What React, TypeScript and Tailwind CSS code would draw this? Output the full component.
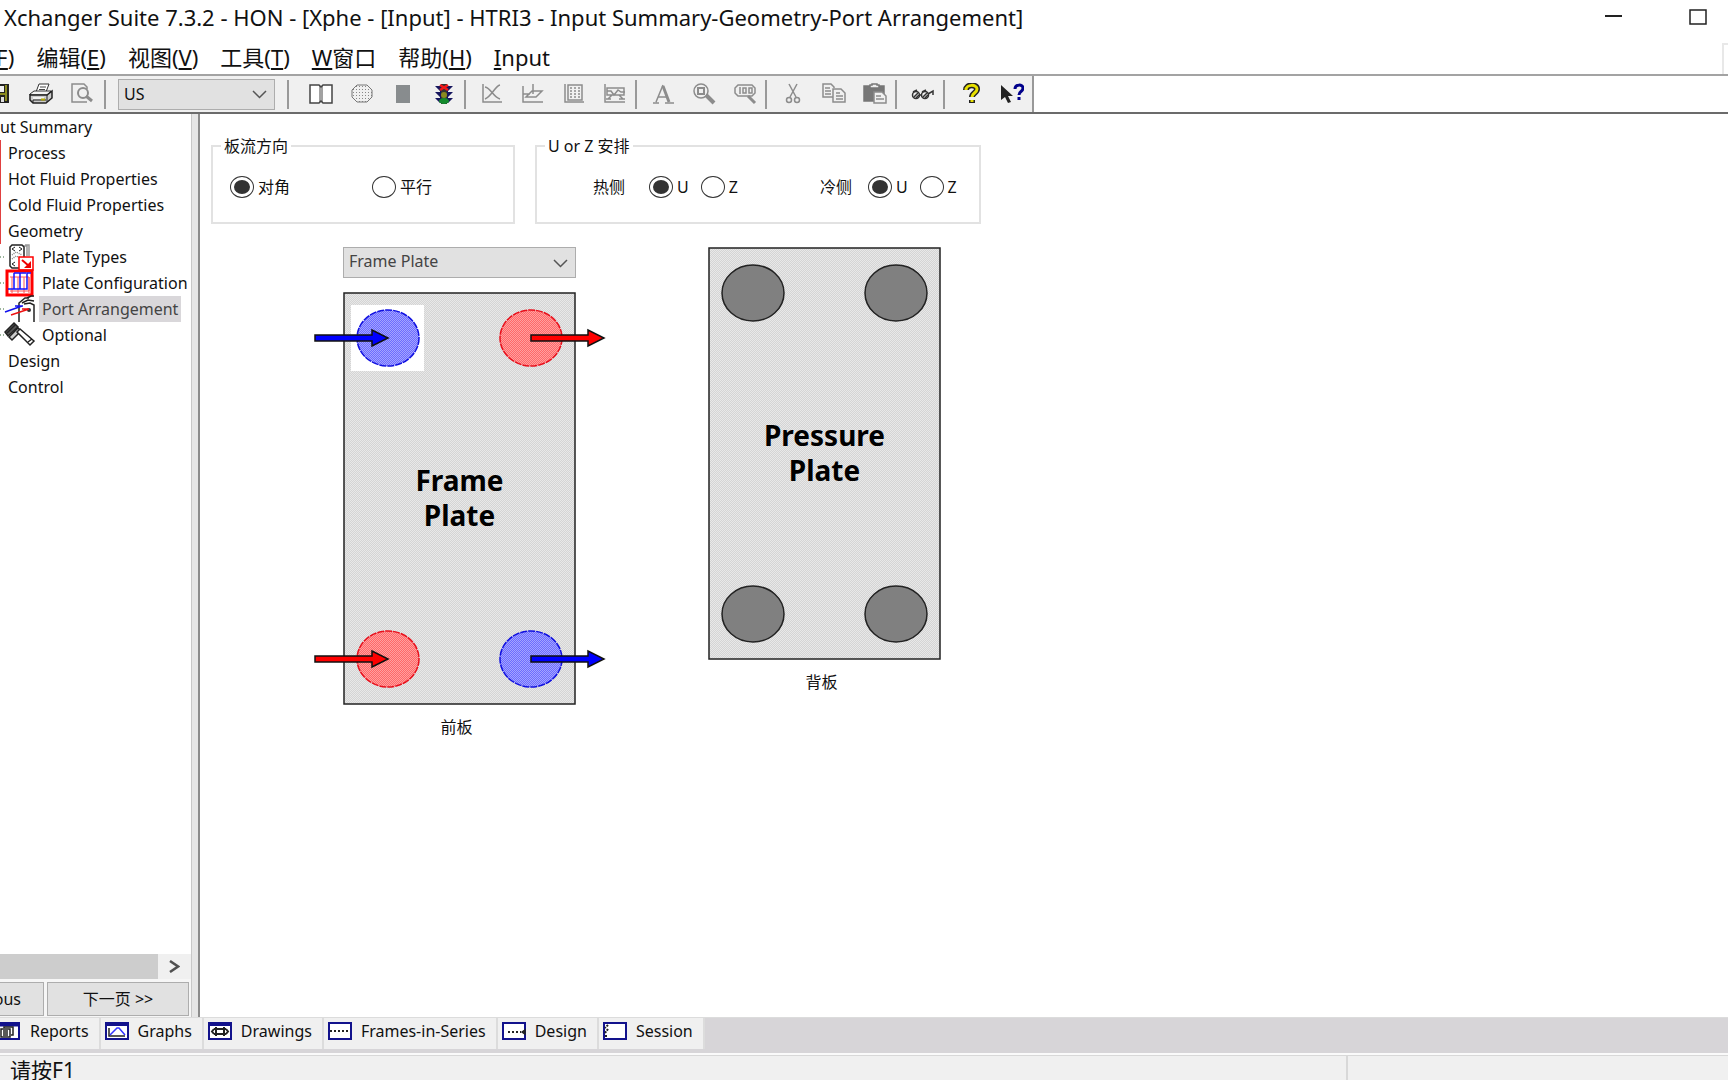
import { useState, type ReactNode } from 'react';
import clsx from 'clsx';

type Flow = 'in' | 'out';
type Port = { cx: number; cy: number; fluid?: 'hot' | 'cold'; flow?: Flow; selected?: boolean };

const FLUID = {
  hot: { edge: '#e8101c', arrow: '#ff0000', fill: 'url(#dither-hot)' },
  cold: { edge: '#1010e0', arrow: '#0000ff', fill: 'url(#dither-cold)' },
};

const FRAME_PORTS: Port[] = [
  { cx: 45, cy: 46, fluid: 'cold', flow: 'in', selected: true },
  { cx: 188, cy: 46, fluid: 'hot', flow: 'out' },
  { cx: 45, cy: 367, fluid: 'hot', flow: 'in' },
  { cx: 188, cy: 367, fluid: 'cold', flow: 'out' },
];

const PRESSURE_PORTS: Port[] = [
  { cx: 45, cy: 46 },
  { cx: 188, cy: 46 },
  { cx: 45, cy: 367 },
  { cx: 188, cy: 367 },
];

const MENUS = [
  { pre: '', key: 'F', post: ')' },
  { pre: '编辑(', key: 'E', post: ')' },
  { pre: '视图(', key: 'V', post: ')' },
  { pre: '工具(', key: 'T', post: ')' },
  { pre: '', key: 'W', post: '窗口' },
  { pre: '帮助(', key: 'H', post: ')' },
  { pre: '', key: 'I', post: 'nput' },
];

export default function App() {
  return (
    <div className="flex h-screen flex-col overflow-hidden bg-white font-['Noto_Sans','Noto_Sans_CJK_SC',sans-serif] text-base text-[#111]">
      <TitleBar />
      <MenuBar />
      <Toolbar />
      <div className="flex min-h-0 flex-1">
        <Sidebar />
        <main className="min-w-0 flex-1 bg-white pt-5 pl-[11px]">
          <Options />
          <Plates />
        </main>
      </div>
      <TabBar />
      <StatusBar />
    </div>
  );
}

function TitleBar() {
  return (
    <header className="flex h-9 shrink-0 items-center justify-between pl-1">
      <h1 className="text-[22px] leading-8 whitespace-nowrap pb-[2px]">
        Xchanger Suite 7.3.2 - HON - [Xphe - [Input] - HTRI3 - Input Summary-Geometry-Port Arrangement]
      </h1>
      <div className="flex gap-[65px] pr-5">
        <button aria-label="Minimize">
          <svg width="20" height="18"><path d="M2 7H19" stroke="#222" strokeWidth="2" /></svg>
        </button>
        <button aria-label="Maximize">
          <svg width="20" height="18"><path d="M2 1H18V15H2Z" fill="none" stroke="#222" strokeWidth="1.500" /></svg>
        </button>
      </div>
    </header>
  );
}

function MenuBar() {
  return (
    <nav className="flex h-10 shrink-0 items-center justify-between border-b-2 border-[#a3a3a3]">
      <div className="-ml-1 flex gap-[22px] pt-1 text-[22px] leading-8">
        {MENUS.map((m) => (
          <button key={m.key} className="whitespace-nowrap">
            {m.pre}
            <span className="underline underline-offset-2">{m.key}</span>
            {m.post}
          </button>
        ))}
      </div>
      <div className="mt-[7px] h-[31px] w-[6px] border-t-2 border-l-2 border-[#e8e8e8]" />
    </nav>
  );
}

function Chevron() {
  return (
    <svg className="pointer-events-none absolute top-1/2 right-2 -mt-1" width="15" height="9" fill="none" stroke="#555" strokeWidth="1.500">
      <path d="M1 1L7.500 7.500L14 1" />
    </svg>
  );
}

function Separator() {
  return <div className="h-[29px] w-[2px] shrink-0 bg-[#999]" />;
}

function Tool({ label, children }: { label: string; children: ReactNode }) {
  return (
    <button aria-label={label} className="flex h-8 w-[41px] shrink-0 items-center justify-center">
      <svg width="24" height="22" viewBox="0 0 24 22" fill="none" stroke="#8c8c8c" strokeWidth="1.500">
        {children}
      </svg>
    </button>
  );
}

function ToolGroup({ children }: { children: ReactNode }) {
  return (
    <>
      <Separator />
      <div className="flex pl-[5px]">{children}</div>
    </>
  );
}

function Toolbar() {
  return (
    <div className="flex h-[38px] shrink-0 border-b-2 border-[#6b6b6b]">
      <div className="flex items-center border-r-2 border-[#999] bg-[#f0f0f0]">
        <button aria-label="Save" className="w-5 shrink-0">
          <svg width="10" height="22">
            <path d="M0 1H9V20H0Z" fill="#222" />
            <path d="M0 3H4V9H0Z" fill="#f0f0f0" />
            <path d="M5 2H7V18H5ZM0 10H5V12H0Z" fill="#8a8a20" />
            <path d="M1 14H4V19H1Z" fill="#ddd" />
          </svg>
        </button>
        <Tool label="Print">
          <path d="M7 9L10 1H20L17 9" fill="#fff" stroke="#333" strokeWidth="1" />
          <path d="M11 4H17M10 6.500H16" stroke="#444" strokeWidth="1" />
          <path d="M1 11L5 8H22L18 12H1Z" fill="#f4f4f4" stroke="#333" strokeWidth="1" />
          <path d="M1 11V17L4 20H17L23 15V8L18 12H1" fill="#ccc" stroke="#222" />
          <path d="M18 12V19M4 20V17H17" stroke="#222" strokeWidth="1" />
          <path d="M4 15H15" stroke="#fff" />
          <path d="M12 16.500H16" stroke="#b0a800" strokeWidth="2" />
        </Tool>
        <Tool label="Print preview">
          <path d="M17 19H2V1H14L17 4V6" />
          <circle cx="13" cy="10" r="5" strokeWidth="2" />
          <path d="M16 13L22 18" strokeWidth="3" />
        </Tool>
        <div className="pl-[2px]">
          <Separator />
        </div>
        <div className="relative mx-3 w-[157px]">
          <select aria-label="Units" className="h-[31px] w-full appearance-none border border-[#adadad] bg-[#e1e1e1] pl-[5px] text-base leading-6">
            <option>US</option>
            <option>SI</option>
            <option>MKH</option>
          </select>
          <Chevron />
        </div>
        <Separator />
        <div className="flex pl-[11px]">
          <Tool label="Tile">
            <path d="M1 2H10L12 4L14 2H23V20H14L12 18L10 20H1Z" fill="#fff" stroke="#444" />
            <path d="M11 3V19M13 3V19" stroke="#444" strokeWidth="1" />
          </Tool>
          <Tool label="Stop">
            <path d="M7 2H17L22 7V14L17 19H7L2 14V7Z" fill="url(#stipple)" stroke="#777" strokeWidth="1" />
          </Tool>
          <Tool label="Halt"><path d="M5 2H19V20H5Z" fill="#888c8e" stroke="none" /></Tool>
          <Tool label="Run">
            <path d="M3 3H21L16 8V9H21L16 14V15H21L16 20H8L3 15H8V14L3 9H8V8Z" fill="#16165e" stroke="none" />
            <path d="M9 1H15V21H9Z" fill="#333" stroke="none" />
            <path d="M8 2L16 7M16 2L8 7" stroke="#f01818" strokeWidth="2.500" />
            <circle cx="12" cy="12" r="3" fill="#8a8a20" stroke="none" />
            <ellipse cx="12" cy="18" rx="5" ry="3" fill="#138a2c" stroke="none" />
          </Tool>
        </div>
        <ToolGroup>
          <Tool label="Cross plot">
            <path d="M3 1V19H22M5 4C11 5 13 14 20 16M20 2C15 3 12 13 5 16" />
          </Tool>
          <Tool label="Surface plot">
            <path d="M2 3V19H22M2 11H9M5 14H15L21 8H11ZM12 1V11" />
          </Tool>
          <Tool label="Grid">
            <path d="M3 1V19H22M6 2H20V17H6Z" />
            <path d="M8 5H19M8 8H19M8 11H19M8 14H19" strokeDasharray="2 2" />
          </Tool>
          <Tool label="Profile">
            <path d="M2 1V19H22M4 5H21V12H4ZM4 8H8L11 12L15 7L18 9H22M5 16L9 12M20 16L16 12M3 16H8M16 16H22" />
          </Tool>
        </ToolGroup>
        <ToolGroup>
          <Tool label="Font">
            <path d="M2 20H8M14 20H23M5 19L12 2M7 14H16" />
            <path d="M12 3L18 19" strokeWidth="3" />
          </Tool>
          <Tool label="Zoom">
            <circle cx="9" cy="8" r="7" />
            <path d="M6 5H12V11H6Z" strokeWidth="2" />
            <path d="M14 12L22 20" strokeWidth="4" />
          </Tool>
          <Tool label="Zoom 100%">
            <path d="M5 2H19L22 5V10L19 13H5L2 10V5Z" />
            <path d="M7 4V11M10 5H13V10H10ZM16 5H19V10H16Z" />
            <path d="M15 13L22 20" strokeWidth="3" />
          </Tool>
        </ToolGroup>
        <ToolGroup>
          <Tool label="Cut">
            <path d="M8 1L15 14M16 1L9 14" />
            <circle cx="8" cy="17" r="2.500" />
            <circle cx="16" cy="17" r="2.500" />
          </Tool>
          <Tool label="Copy">
            <path d="M11 14H1V1H9L12 4V5M3 5H8M3 8H9M3 11H9" />
            <path d="M11 6H19L23 10V19H11ZM14 10H18M14 13H21M14 16H21" fill="#f0f0f0" />
          </Tool>
          <Tool label="Paste">
            <path d="M1 3H21V18H1Z" fill="#777" stroke="#777" />
            <path d="M7 5V2H9V1H14V2H16V5Z" fill="#eee" stroke="#777" />
            <path d="M11 9H19L23 13V20H11ZM13 13H18M13 16H21" fill="#f0f0f0" />
          </Tool>
        </ToolGroup>
        <ToolGroup>
          <Tool label="View">
            <g stroke="#333">
              <circle cx="5" cy="12" r="3.500" />
              <circle cx="14" cy="12" r="3.500" />
              <path d="M2 9L6 7M11 9L15 7M3 14L7 10M12 14L16 10M5 15L8 12M14 15L17 12M17 11L22 8V12M8 12H11" />
            </g>
          </Tool>
        </ToolGroup>
        <ToolGroup>
          <Tool label="Help">
            <path d="M7 7C7 1 18 1 18 6C18 10 13 10 13 14M13 17V20" stroke="#222" strokeWidth="6" />
            <path d="M7 7C7 1 18 1 18 6C18 10 13 10 13 14M13 17V19" stroke="#e8e000" strokeWidth="3" />
          </Tool>
          <Tool label="Context help">
            <path d="M1 2V17L5 14L8 20L11 19L8 13H13Z" fill="#222" stroke="none" />
            <path d="M15 6C15 1 23 1 23 5C23 9 19 8 19 12M19 14V17" stroke="#00008b" strokeWidth="3" />
          </Tool>
        </ToolGroup>
      </div>
    </div>
  );
}

function TreeItem({ children, mark }: { children: ReactNode; mark?: boolean }) {
  return (
    <li className={clsx('h-[26px] border-l pl-[7px] leading-[26px] whitespace-nowrap', mark ? 'border-[#e04040]' : 'border-transparent')}>
      {children}
    </li>
  );
}

function TreeLeaf({ label, icon, selected }: { label: string; icon: ReactNode; selected?: boolean }) {
  return (
    <li className="flex h-[26px] items-center">
      <svg width="39" height="28" viewBox="0 0 39 28" fill="none" stroke="#222" strokeWidth="1.500" className="shrink-0">
        <path d="M0 14H5" stroke="#7a9a7a" strokeDasharray="1 2" />
        {icon}
      </svg>
      <span className={clsx('pr-[3px] pl-[3px] leading-[26px] whitespace-nowrap', selected && 'bg-[#d9d7da] text-[#444]')}>{label}</span>
    </li>
  );
}

function Sidebar() {
  return (
    <aside className="flex w-[200px] shrink-0 border-r-2 border-[#8c8c8c]">
      <div className="flex w-[191px] flex-col">
        <ul className="min-h-0 flex-1 overflow-hidden">
          <li className="h-[26px] leading-[26px]">ut Summary</li>
          <TreeItem mark>Process</TreeItem>
          <TreeItem mark>Hot Fluid Properties</TreeItem>
          <TreeItem mark>Cold Fluid Properties</TreeItem>
          <TreeItem mark>Geometry</TreeItem>
          <TreeLeaf
            label="Plate Types"
            icon={
              <>
                <path d="M22 3H27V13M25 2H29V13" stroke="#999" />
                <path d="M12 2H22L24 4V23L22 25H12L10 23V4Z" fill="#fff" />
                <path d="M15 4L12 6L15 8M19 4L22 6L19 8M15 19L12 21L15 23" strokeWidth="1" />
                <path d="M12 12L16 9L22 12M12 16L16 13L22 16" stroke="#888" strokeDasharray="1 1" />
                <path d="M19 14H33V27H19Z" fill="#fff" stroke="#f00" />
                <path d="M22 17L29 23" stroke="#e00" strokeWidth="2" />
                <path d="M31 18V25H24Z" fill="#e00" stroke="none" />
              </>
            }
          />
          <TreeLeaf
            label="Plate Configuration"
            icon={
              <>
                <path d="M7 2H32V26H7Z" fill="#fff" stroke="#f00" strokeWidth="3" />
                <path d="M10 8H29V22H10M12 8V24M18 8V24M24 8V24M29 8V24" stroke="#f55" strokeWidth="1" />
                <path d="M8 20H27V4H31M14 4V20M14 4H26M20 4V20" stroke="#11f" />
              </>
            }
          />
          <TreeLeaf
            selected
            label="Port Arrangement"
            icon={
              <>
                <path d="M19 9L24 5L29 9H34V27H19Z" fill="#fff" stroke="none" />
                <path d="M19 27V8L25 3H29M34 27V10L30 8L24 9M22 8L28 5L34 6M27 3L31 1H34" />
                <circle cx="29" cy="15" r="2" fill="#333" stroke="none" />
                <path d="M5 17L22 11M15 11L23 11" stroke="#11e" />
                <path d="M11 20L29 14M22 14H28" stroke="#e11" />
              </>
            }
          />
          <TreeLeaf
            label="Optional"
            icon={
              <>
                <path d="M5 11L14 2L18 6L8 15Z" fill="#555" />
                <path d="M9 16L18 7L21 10L12 19Z" fill="#ccc" />
                <path d="M17 11L20 8L34 20L30 24Z" fill="#fff" />
                <path d="M28 21L32 18M7 12L15 4" />
              </>
            }
          />
          <TreeItem>Design</TreeItem>
          <TreeItem>Control</TreeItem>
        </ul>
        <div className="flex h-[25px] shrink-0 bg-[#f0f0f0]">
          <div className="w-[158px] bg-[#cdcdcd]" />
          <button aria-label="Scroll right" className="flex flex-1 items-center justify-center">
            <svg width="11" height="13" fill="none" stroke="#505050" strokeWidth="2.500"><path d="M1 1L9 6.500L1 12" /></svg>
          </button>
        </div>
        <div className="flex h-[38px] shrink-0 gap-[3px] bg-[#f6f6f6] pt-[3px] pb-[1px]">
          <button className="flex h-[34px] w-[44px] items-center justify-end border border-l-0 border-[#adadad] bg-[#e1e1e1] pr-[22px]">ous</button>
          <button className="h-[34px] w-[142px] border border-[#adadad] bg-[#e1e1e1]">下一页 &gt;&gt;</button>
        </div>
      </div>
      <div className="flex-1 border-l border-[#c8c8c8] bg-[#e6e6e6]" />
    </aside>
  );
}

function Radio({ name, label, checked, onChange }: { name: string; label: string; checked: boolean; onChange: () => void }) {
  return (
    <label className="flex items-center gap-1">
      <input
        type="radio"
        name={name}
        checked={checked}
        onChange={onChange}
        className="grid h-[22px] w-6 appearance-none place-items-center rounded-[50%] border border-[#333] bg-white before:h-[14px] before:w-4 before:rounded-[50%] checked:before:bg-[#333]"
      />
      {label}
    </label>
  );
}

function Options() {
  const [dir, setDir] = useState('diag');
  const [hot, setHot] = useState('U');
  const [cold, setCold] = useState('U');

  return (
    <div className="flex gap-5 leading-6">
      <fieldset className="flex h-[90px] w-[304px] shrink-0 border-2 border-[#e2e2e2] pt-[17px] pl-[17px]">
        <legend className="-ml-[9px] px-[3px]">板流方向</legend>
        <div className="flex h-6 gap-[82px]">
          <Radio name="direction" label="对角" checked={dir === 'diag'} onChange={() => setDir('diag')} />
          <Radio name="direction" label="平行" checked={dir === 'par'} onChange={() => setDir('par')} />
        </div>
      </fieldset>
      <fieldset className="h-[90px] w-[446px] shrink-0 border-2 border-[#e2e2e2] pt-[17px] pl-[56px]">
        <legend className="-ml-12 px-[3px]">U or Z 安排</legend>
        <div className="flex h-6 gap-[82px]">
          <div className="flex items-center gap-3" role="radiogroup" aria-label="热侧">
            <span className="pr-3">热侧</span>
            <Radio name="hot" label="U" checked={hot === 'U'} onChange={() => setHot('U')} />
            <Radio name="hot" label="Z" checked={hot === 'Z'} onChange={() => setHot('Z')} />
          </div>
          <div className="flex items-center gap-3" role="radiogroup" aria-label="冷侧">
            <span className="pr-1">冷侧</span>
            <Radio name="cold" label="U" checked={cold === 'U'} onChange={() => setCold('U')} />
            <Radio name="cold" label="Z" checked={cold === 'Z'} onChange={() => setCold('Z')} />
          </div>
        </div>
      </fieldset>
    </div>
  );
}

function PortMark({ port }: { port: Port }) {
  const { cx, cy, fluid, flow, selected } = port;
  const f = fluid && FLUID[fluid];
  // inlet arrows end at the port centre, outlet arrows start there
  const x = flow === 'in' ? cx - 73 : cx;
  return (
    <g>
      {selected && <rect x={cx - 37} y={cy - 33} width="73" height="66" fill="#fff" />}
      <ellipse
        cx={cx}
        cy={cy}
        rx="31"
        ry="28"
        fill={f ? f.fill : '#808080'}
        stroke={f ? f.edge : '#222'}
        strokeWidth="1.500"
        strokeDasharray={f ? '7 1' : undefined}
      />
      {f && (
        <path
          d={`M${x} ${cy - 3}H${x + 57}V${cy - 8}L${x + 73} ${cy}L${x + 57} ${cy + 8}V${cy + 3}H${x}Z`}
          fill={f.arrow}
          stroke="#111"
          strokeWidth="1.500"
        />
      )}
    </g>
  );
}

function Plate({ name, caption, ports }: { name: string; caption: string; ports: Port[] }) {
  return (
    <figure className="flex w-[233px] flex-col items-center">
      <div className="relative flex h-[413px] w-full items-center justify-center">
        <svg className="absolute inset-0 overflow-visible" width="233" height="413">
          <rect x="1" y="1" width="231" height="411" fill="url(#dither-plate)" stroke="#222" strokeWidth="1.500" />
          {ports.map((p) => <PortMark key={`${p.cx}-${p.cy}`} port={p} />)}
        </svg>
        <div className="relative w-[140px] pb-[2px] text-center text-[28px] leading-[35px] font-bold text-black">{name}</div>
      </div>
      <figcaption className="mt-[10px] pr-[6px] leading-6">{caption}</figcaption>
    </figure>
  );
}

function Dither({ id, light, dark }: { id: string; light: string; dark: string }) {
  return (
    <pattern id={id} width="2" height="2" patternUnits="userSpaceOnUse">
      <rect width="2" height="2" fill={light} />
      <path d="M0 0H1V1H0ZM1 1H2V2H1Z" fill={dark} />
    </pattern>
  );
}

function Plates() {
  return (
    <div className="mt-[23px] flex items-start gap-[132px] pl-[132px]">
      <svg width="0" height="0" className="absolute">
        <defs>
          <Dither id="dither-plate" light="#e8e8e8" dark="#d4d4d4" />
          <Dither id="dither-hot" light="#ffa0a0" dark="#ff6868" />
          <Dither id="dither-cold" light="#a4a4ff" dark="#6c6cff" />
          <pattern id="stipple" width="3" height="3" patternUnits="userSpaceOnUse">
            <path d="M0 0H1V1H0Z" fill="#888" />
          </pattern>
        </defs>
      </svg>
      <div className="flex flex-col gap-[14px]">
        <div className="relative">
          <select aria-label="Plate" className="block h-[31px] w-full appearance-none border border-[#adadad] bg-[#e1e1e1] pb-1 pl-[5px] text-base leading-6 text-[#444]">
            <option>Frame Plate</option>
            <option>Pressure Plate</option>
          </select>
          <Chevron />
        </div>
        <Plate name="Frame Plate" caption="前板" ports={FRAME_PORTS} />
      </div>
      <Plate name="Pressure Plate" caption="背板" ports={PRESSURE_PORTS} />
    </div>
  );
}

function Tab({ label, children }: { label: string; children: ReactNode }) {
  return (
    <button className="flex h-[31px] items-center gap-[9px] border-r-2 border-[#dcdcdc] bg-[#f0f0f0] pr-[10px] pb-[5px] pl-1 leading-6 whitespace-nowrap">
      <svg width="24" height="18" viewBox="0 0 24 18" fill="none" stroke="#222" strokeWidth="1.500" className="shrink-0">
        <path d="M1 1H23V17H1Z" fill="#fff" stroke="#12128c" strokeWidth="2" />
        {children}
      </svg>
      {label}
    </button>
  );
}

function TabBar() {
  return (
    <div className="flex h-9 shrink-0 border-t border-[#dcdcdc] bg-[#d7d5d8]">
      <div className="flex">
        <button className="flex h-[31px] items-center gap-[10px] border-r-2 border-[#dcdcdc] bg-[#f0f0f0] pr-[10px] pb-[5px] leading-6">
          <svg width="20" height="18" fill="none" stroke="#222">
            <path d="M-2 1H19V17H-2" fill="#fff" stroke="#12128c" strokeWidth="2" />
            <path d="M0 3H19" stroke="#12128c" strokeWidth="3" />
            <path d="M1 7H10V15H1ZM4 6V5H13V13H11M3 9H8M3 11H8M3 13H8" strokeWidth="1.500" />
          </svg>
          Reports
        </button>
        <Tab label="Graphs">
          <path d="M1 2H23" stroke="#12128c" strokeWidth="4" />
          <path d="M4 6V14H20" />
          <path d="M5 13L12 6H14L20 13" stroke="#33f" />
        </Tab>
        <Tab label="Drawings">
          <path d="M1 2H23" stroke="#12128c" strokeWidth="4" />
          <path d="M6 7H18M6 12H18M8 5V14M16 5V14M6 7L4 9.500L6 12M18 7L20 9.500L18 12" strokeWidth="2" />
        </Tab>
        <Tab label="Frames-in-Series">
          <path d="M2 9H22" strokeWidth="2" strokeDasharray="2 2" />
        </Tab>
        <Tab label="Design">
          <path d="M6 10H19" strokeWidth="2" strokeDasharray="2 2" />
          <path d="M20 10L23 8V12Z" fill="#222" />
        </Tab>
        <Tab label="Session">
          <path d="M5 3L2 6M5 7L2 11M2 14H5" strokeWidth="2" strokeDasharray="2 1" />
        </Tab>
      </div>
    </div>
  );
}

function StatusBar() {
  return (
    <footer className="flex h-[27px] shrink-0 border-t-2 border-[#fafafa] bg-[#f0f0f0] text-[21px]">
      <div className="flex-1 border-t border-[#d8d8d8] pl-[10px] leading-7">请按F1</div>
      <div className="w-[382px] border-t border-l-2 border-[#d8d8d8]" />
    </footer>
  );
}
